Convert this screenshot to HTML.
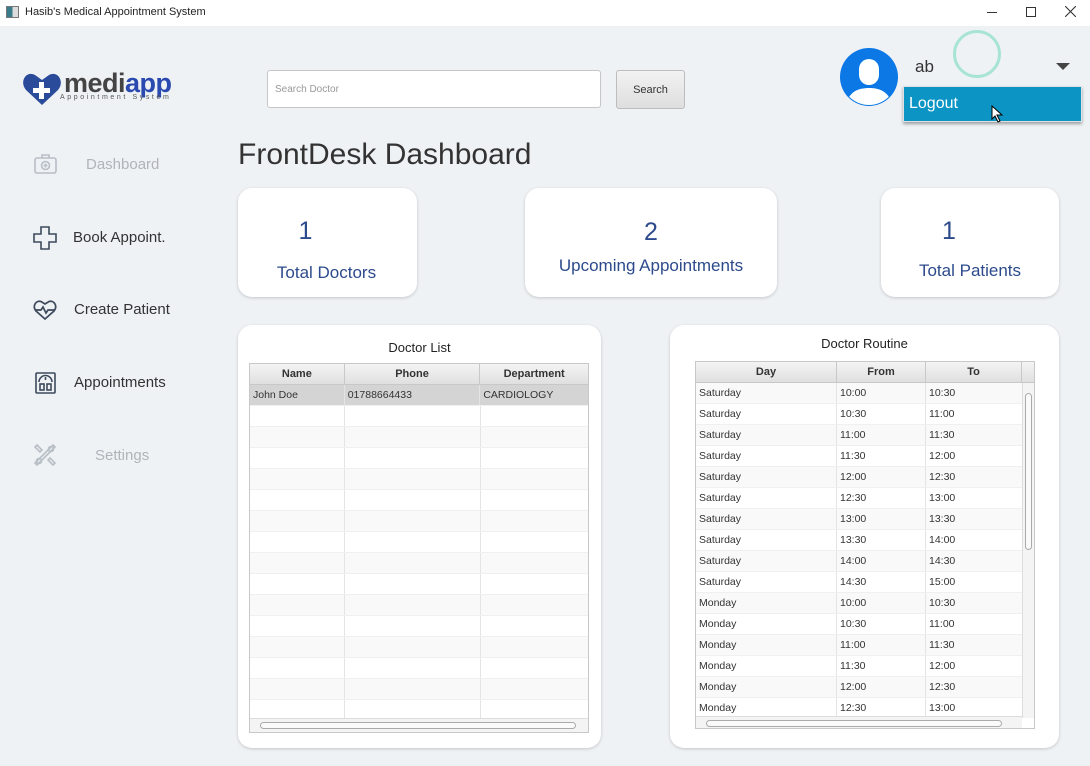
<!DOCTYPE html>
<html><head><meta charset="utf-8">
<style>
*{box-sizing:border-box;margin:0;padding:0}
body{width:1090px;height:766px;background:#eff2f5;font-family:"Liberation Sans","DejaVu Sans",sans-serif;position:relative;overflow:hidden;color:#333}
.a{position:absolute}
.tb{left:0;top:0;width:1090px;height:26px;background:#fff}
.card{background:#fff;border-radius:14px;box-shadow:0 1px 3px rgba(0,0,0,.18)}
.num{color:#2c4a8c;font-size:25px;text-align:center;width:100%}
.lbl{color:#2c4a8c;font-size:17px;text-align:center;width:100%}
.nav{font-size:15px;color:#333}
.tbl{background:#fff;border:1px solid #c8c8c8;overflow:hidden}
.hd{height:21px;background:linear-gradient(#f4f4f4,#e0e0e0);border-bottom:1px solid #c8c8c8;font-size:11px;font-weight:bold;color:#333;display:flex}
.hd div{border-right:1px solid #c8c8c8;text-align:center;line-height:21px}
.row{height:21px;display:flex;font-size:10.5px;color:#333;border-bottom:1px solid #f0f0f0}
.row div{border-right:1px solid #e4e4e4;line-height:21px;padding-left:3px}
.row div:last-child{border-right:0}
.row:nth-child(odd){background:#f9f9f9}
</style></head><body>
<div class="a tb"></div>
<div class="a" style="left:6px;top:6px;width:13px;height:12px;border:1px solid #777;background:linear-gradient(90deg,#3a7c8c 50%,#ddd 50%)"></div>
<div class="a" style="left:25px;top:6px;font-size:11px;color:#222">Hasib's Medical Appointment System</div>
<div class="a" style="left:987px;top:12px;width:10px;height:1px;background:#333"></div>
<div class="a" style="left:1026px;top:7px;width:10px;height:10px;border:1px solid #333"></div>
<svg class="a" style="left:1065px;top:6px" width="11" height="11" viewBox="0 0 11 11" stroke="#333" stroke-width="1.1"><path d="M0 0L11 11M11 0L0 11"/></svg>

<!-- logo -->
<svg class="a" style="left:22px;top:72px" width="40" height="34" viewBox="0 0 40 34"><path d="M20 33 L4 18 C-3 10 4 -2 13 3 L20 8 L27 3 C36 -2 43 10 36 18 Z" fill="#2a4a9a"/><path d="M11 16h6v-6h5v6h6v5h-6v6h-5v-6h-6z" fill="#fff"/></svg>
<div class="a" style="left:64px;top:68px;font-size:27px;font-weight:bold;color:#444;letter-spacing:-0.5px">medi<span style="color:#2a4ab0">app</span></div>
<div class="a" style="left:60px;top:94px;font-size:7px;color:#555;letter-spacing:2.6px">Appointment System</div>

<!-- search -->
<div class="a" style="left:267px;top:70px;width:334px;height:38px;background:#fff;border:1px solid #c6c6c6;border-radius:3px;font-size:10px;color:#999;padding:13px 0 0 7px">Search Doctor</div>
<div class="a" style="left:616px;top:70px;width:69px;height:39px;background:linear-gradient(#f2f2f2,#dedede);border:1px solid #bdbdbd;border-radius:3px;font-size:11px;color:#333;text-align:center;line-height:38px">Search</div>

<!-- user -->
<svg class="a" style="left:840px;top:48px" width="58" height="58" viewBox="0 0 58 58"><circle cx="29" cy="29" r="29" fill="#0b78e6"/><clipPath id="c"><circle cx="29" cy="29" r="28"/></clipPath><g clip-path="url(#c)" fill="#fff"><rect x="19" y="11" width="20" height="26" rx="10"/><path d="M6 58 C8 44 18 40 29 40 C40 40 50 44 52 58Z"/></g></svg>
<div class="a" style="left:915px;top:57px;font-size:17px;color:#333">ab</div>
<div class="a" style="left:953px;top:30px;width:48px;height:48px;border:3px solid #a8e4d6;border-radius:50%"></div>
<div class="a" style="left:1056px;top:63px;width:0;height:0;border-left:7px solid transparent;border-right:7px solid transparent;border-top:7px solid #444"></div>
<div class="a" style="left:903px;top:86px;width:179px;height:36px;background:#0b94c4;box-shadow:0 2px 3px rgba(0,0,0,.35);border:1px solid #e0e0e0;color:#fff;font-size:16px;padding:8px 0 0 5px">Logout</div>
<svg class="a" style="left:991px;top:105px" width="14" height="18" viewBox="0 0 14 18"><path d="M1 1 L1 14 L4 11 L7 17 L9 16 L6 10 L11 10 Z" fill="#fff" stroke="#000"/></svg>

<!-- sidebar -->
<svg class="a" style="left:34px;top:153px" width="23" height="22" viewBox="0 0 23 22" fill="none" stroke="#b8bec6" stroke-width="1.6"><rect x="1" y="5" width="21" height="15" rx="2"/><path d="M8 5V2h7v3"/><circle cx="11.5" cy="12.5" r="4"/><path d="M11.5 10.5v4M9.5 12.5h4"/></svg>
<div class="a nav" style="left:86px;top:156px;color:#b0b4ba">Dashboard</div>
<svg class="a" style="left:33px;top:226px" width="24" height="24" viewBox="0 0 24 24" fill="none" stroke="#3d4a5c" stroke-width="1.6"><path d="M8 1h8v7h7v8h-7v7H8v-7H1V8h7z"/></svg>
<div class="a nav" style="left:73px;top:229px">Book Appoint.</div>
<svg class="a" style="left:33px;top:300px" width="24" height="20" viewBox="0 0 24 20" fill="none" stroke="#3d4a5c" stroke-width="1.7"><path d="M12 19 L3 11 C-1 6 3 0 8 1.5 L12 4 L16 1.5 C21 0 25 6 21 11 Z"/><path d="M2 10h6l2-3 3 6 2-3h7"/></svg>
<div class="a nav" style="left:74px;top:301px">Create Patient</div>
<svg class="a" style="left:35px;top:372px" width="21" height="22" viewBox="0 0 21 22" fill="none" stroke="#3d4a5c" stroke-width="1.6"><rect x="1" y="1" width="19" height="20" rx="1"/><path d="M4 10a6.5 6.5 0 0 1 13 0"/><rect x="5" y="12" width="4" height="6"/><rect x="12" y="12" width="4" height="6"/><path d="M10.5 5v3"/></svg>
<div class="a nav" style="left:74px;top:374px">Appointments</div>
<svg class="a" style="left:33px;top:443px" width="24" height="24" viewBox="0 0 24 24" fill="none" stroke="#b8bec6" stroke-width="1.6"><path d="M4 2l5 5-2 2L2 4zM20 22l-5-5 2-2 5 5zM20 2l2 2L4 22l-2-2z"/><circle cx="6" cy="18" r="2.5"/><circle cx="18" cy="6" r="2.5"/></svg>
<div class="a nav" style="left:95px;top:447px;color:#b0b4ba">Settings</div>

<div class="a" style="left:238px;top:138px;font-size:30px;color:#333">FrontDesk Dashboard</div>

<!-- cards -->
<div class="a card" style="left:238px;top:188px;width:179px;height:109px"><div class="a num" style="top:29px;left:-22px">1</div><div class="a lbl" style="top:75px;left:-1px">Total Doctors</div></div>
<div class="a card" style="left:525px;top:188px;width:252px;height:109px"><div class="a num" style="top:30px">2</div><div class="a lbl" style="top:68px">Upcoming Appointments</div></div>
<div class="a card" style="left:881px;top:188px;width:178px;height:109px"><div class="a num" style="top:29px;left:-21px">1</div><div class="a lbl" style="top:73px">Total Patients</div></div>

<!-- doctor list -->
<div class="a card" style="left:238px;top:325px;width:363px;height:423px"></div>
<div class="a" style="left:238px;top:340px;width:363px;text-align:center;font-size:13px;color:#222">Doctor List</div>
<div class="a tbl" style="left:249px;top:363px;width:340px;height:370px">
<div class="hd"><div style="width:95px">Name</div><div style="width:136px">Phone</div><div style="width:108px;border:0">Department</div></div>
<div>
<div class="row" style="background:#d4d4d4"><div style="width:95px">John Doe</div><div style="width:136px">01788664433</div><div style="width:108px">CARDIOLOGY</div></div>
<div class="row"><div style="width:95px"></div><div style="width:136px"></div><div></div></div>
<div class="row"><div style="width:95px"></div><div style="width:136px"></div><div></div></div>
<div class="row"><div style="width:95px"></div><div style="width:136px"></div><div></div></div>
<div class="row"><div style="width:95px"></div><div style="width:136px"></div><div></div></div>
<div class="row"><div style="width:95px"></div><div style="width:136px"></div><div></div></div>
<div class="row"><div style="width:95px"></div><div style="width:136px"></div><div></div></div>
<div class="row"><div style="width:95px"></div><div style="width:136px"></div><div></div></div>
<div class="row"><div style="width:95px"></div><div style="width:136px"></div><div></div></div>
<div class="row"><div style="width:95px"></div><div style="width:136px"></div><div></div></div>
<div class="row"><div style="width:95px"></div><div style="width:136px"></div><div></div></div>
<div class="row"><div style="width:95px"></div><div style="width:136px"></div><div></div></div>
<div class="row"><div style="width:95px"></div><div style="width:136px"></div><div></div></div>
<div class="row"><div style="width:95px"></div><div style="width:136px"></div><div></div></div>
<div class="row"><div style="width:95px"></div><div style="width:136px"></div><div></div></div>
<div class="row"><div style="width:95px"></div><div style="width:136px"></div><div></div></div>
</div>
<div class="a" style="left:0;top:354px;width:338px;height:14px;background:#f4f4f4;border-top:1px solid #ddd"><div class="a" style="left:10px;top:3px;width:316px;height:7px;border:1px solid #aaa;border-radius:4px;background:#fafafa"></div></div>
</div>

<!-- routine -->
<div class="a card" style="left:670px;top:325px;width:389px;height:423px"></div>
<div class="a" style="left:670px;top:336px;width:389px;text-align:center;font-size:13px;color:#222">Doctor Routine</div>
<div class="a tbl" style="left:695px;top:361px;width:340px;height:368px">
<div class="hd"><div style="width:141px">Day</div><div style="width:89px">From</div><div style="width:96px">To</div><div style="flex:1;border:0"></div></div>
<div style="width:326px">
<div class="row"><div style="width:141px">Saturday</div><div style="width:89px">10:00</div><div style="width:96px">10:30</div></div>
<div class="row"><div style="width:141px">Saturday</div><div style="width:89px">10:30</div><div style="width:96px">11:00</div></div>
<div class="row"><div style="width:141px">Saturday</div><div style="width:89px">11:00</div><div style="width:96px">11:30</div></div>
<div class="row"><div style="width:141px">Saturday</div><div style="width:89px">11:30</div><div style="width:96px">12:00</div></div>
<div class="row"><div style="width:141px">Saturday</div><div style="width:89px">12:00</div><div style="width:96px">12:30</div></div>
<div class="row"><div style="width:141px">Saturday</div><div style="width:89px">12:30</div><div style="width:96px">13:00</div></div>
<div class="row"><div style="width:141px">Saturday</div><div style="width:89px">13:00</div><div style="width:96px">13:30</div></div>
<div class="row"><div style="width:141px">Saturday</div><div style="width:89px">13:30</div><div style="width:96px">14:00</div></div>
<div class="row"><div style="width:141px">Saturday</div><div style="width:89px">14:00</div><div style="width:96px">14:30</div></div>
<div class="row"><div style="width:141px">Saturday</div><div style="width:89px">14:30</div><div style="width:96px">15:00</div></div>
<div class="row"><div style="width:141px">Monday</div><div style="width:89px">10:00</div><div style="width:96px">10:30</div></div>
<div class="row"><div style="width:141px">Monday</div><div style="width:89px">10:30</div><div style="width:96px">11:00</div></div>
<div class="row"><div style="width:141px">Monday</div><div style="width:89px">11:00</div><div style="width:96px">11:30</div></div>
<div class="row"><div style="width:141px">Monday</div><div style="width:89px">11:30</div><div style="width:96px">12:00</div></div>
<div class="row"><div style="width:141px">Monday</div><div style="width:89px">12:00</div><div style="width:96px">12:30</div></div>
<div class="row"><div style="width:141px">Monday</div><div style="width:89px">12:30</div><div style="width:96px">13:00</div></div>
</div>
<div class="a" style="left:326px;top:21px;width:13px;height:335px;background:#f4f4f4;border-left:1px solid #ddd"><div class="a" style="left:2px;top:10px;width:7px;height:157px;border:1px solid #aaa;border-radius:4px;background:#fafafa"></div></div>
<div class="a" style="left:0;top:354px;width:326px;height:13px;background:#f4f4f4;border-top:1px solid #ddd"><div class="a" style="left:10px;top:3px;width:296px;height:7px;border:1px solid #aaa;border-radius:4px;background:#fafafa"></div></div>
</div>
</body></html>
